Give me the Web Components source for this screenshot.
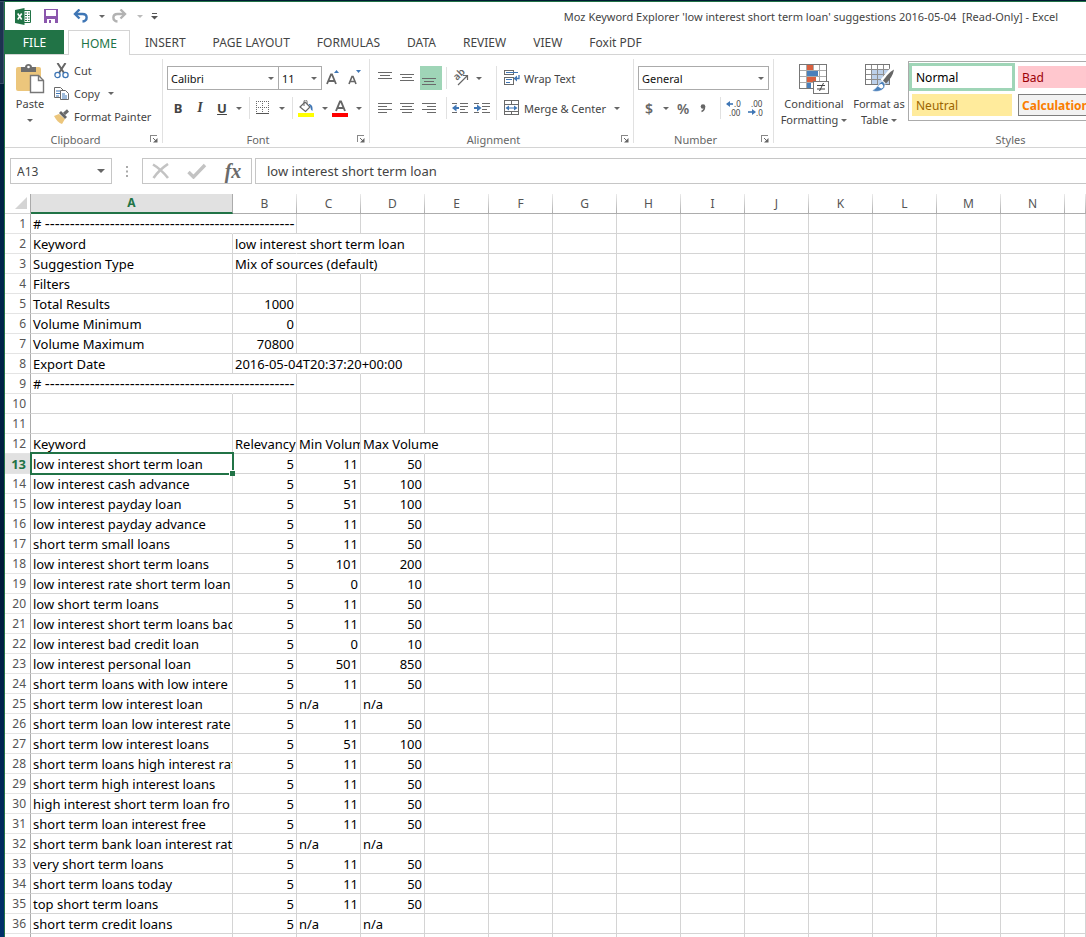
<!DOCTYPE html>
<html lang="en">
<head>
<meta charset="utf-8">
<meta name="viewport" content="width=device-width, initial-scale=1">
<title>Moz Keyword Explorer - Excel</title>
<style>
  html, body { margin: 0; height: 100%; }
  body { font-family: "Noto Sans", "Open Sans", sans-serif; background: #001a33; color: #444; }
</style>
</head>
<body>
<xl-app></xl-app>
<script>
const svg = (w, h, body) =>
  `<svg width="${w}" height="${h}" viewBox="0 0 ${w} ${h}" fill="none" stroke="#6a6a6a" aria-hidden="true">${body}</svg>`;
const bars = (list) => svg(14, 13, `<g shape-rendering="crispEdges">` +
  list.map(([x, y, w]) => `<path d="M${x} ${y}.5h${w}"/>`).join('') + `</g>`);

const ICONS = {
  excel: svg(17, 17, `<path d="M9 2.500h6.500v12H9" stroke="#217346" fill="#fff"/><path d="M10 5h2M10 7.500h2M10 10h2M10 12.500h2M13 5h1.500M13 7.500h1.500M13 10h1.500M13 12.500h1.500" stroke="#217346"/><path d="M0 2l9.500-2v17L0 15z" fill="#217346" stroke="none"/><path d="M2.700 5.500l4 6M6.700 5.500l-4 6" stroke="#fff" stroke-width="1.600"/>`),
  save: svg(14, 14, `<path d="M1 1h12v12H1z" stroke="#8b57ad" stroke-width="2" fill="#8b57ad"/><path d="M2 1h10v6H2z" fill="#fff" stroke="none"/><path d="M3 10h8v4H3z" fill="#fff" stroke="none"/><path d="M5 11h2v3H5z" fill="#8b57ad" stroke="none"/>`),
  undo: svg(16, 14, `<path d="M3 5h6.500c5.500 0 5.500 7 0 7.500" stroke="#3f76b5" stroke-width="2.400"/><path d="M6.500.5L2 5l4.500 4.500" stroke="#3f76b5" stroke-width="2.400"/>`),
  redo: svg(16, 14, `<path d="M13 5H6.500C1 5 1 12 6.500 12.500" stroke="#b2b2b2" stroke-width="2.400"/><path d="M9.500.5L14 5 9.500 9.500" stroke="#b2b2b2" stroke-width="2.400"/>`),
  customize: svg(7, 7, `<path d="M1 .5h5" stroke="#555"/><path d="M0 3h7L3.500 6.500z" fill="#555" stroke="none"/>`),
  paste: svg(30, 32, `<path d="M3 4h21a2 2 0 0 1 2 2v22H3a2 2 0 0 1-2-2V6a2 2 0 0 1 2-2z" fill="#ecc67c" stroke="none"/><path d="M6 4h4c0-4 7-4 7 0h4v5H6z" fill="#6d6d6d" stroke="none"/><circle cx="13.500" cy="4" r="1.300" fill="#fff" stroke="none"/><path d="M15.500 12.500h8l5 5v12h-13z" fill="#fff" stroke="#777" stroke-width="1.400"/><path d="M23.500 12.500v5h5" stroke="#777" stroke-width="1.400"/>`),
  cut: svg(16, 16, `<path d="M3.500 0l6.500 10M11.500 0L5 10" stroke="#666" stroke-width="2"/><circle cx="3.500" cy="12" r="2.600" stroke="#3f76b5" stroke-width="1.300"/><circle cx="11.500" cy="12" r="2.600" stroke="#3f76b5" stroke-width="1.300"/>`),
  copy: svg(16, 15, `<path d="M.5 1.500h6l3 3v7h-9z" fill="#fff"/><path d="M2 5h4M2 7.500h4M2 10h3" stroke="#3f76b5"/><path d="M6.500 4.500h5l3 3v6h-8z" fill="#fff"/><path d="M8 8h3M8 10h5M8 12h5" stroke="#3f76b5"/>`),
  painter: svg(16, 15, `<path d="M0 7l5-2 6 5-3 5C5 14 2 11 0 7z" fill="#ecc67c" stroke="none"/><path d="M5 4l6 6 2-2-6-6z" fill="#666" stroke="none"/><path d="M10 5l4-3.500" stroke-width="3"/>`),
  growFont: svg(14, 16, `<path d="M1 14L5 4.500h1L10 14M2.500 11h6" stroke="#666" stroke-width="1.800"/><path d="M8 3h5l-2.500-3z" fill="#3f76b5" stroke="none"/>`),
  shrinkFont: svg(14, 16, `<path d="M1 14L4 6.500h1L8 14M2 11.500h5" stroke="#666" stroke-width="1.600"/><path d="M8 0h5l-2.500 3z" fill="#3f76b5" stroke="none"/>`),
  borders: svg(14, 14, `<path d="M.5 0v12M6.500 0v12M12.500 0v12M0 .5h13M0 6.500h13" stroke-dasharray="1 1" shape-rendering="crispEdges"/><path d="M0 12.500h13" stroke="#555" shape-rendering="crispEdges"/>`),
  fill: svg(17, 17, `<path d="M2 7l5-5 5 5-4.500 4.500z" fill="#fff" stroke="#666" stroke-width="1.200"/><path d="M6 6V1.500c0-2 3-2 3 0V4" stroke="#666"/><path d="M10.500 4c3 0 4.500 2 4 7-1.500-1-2-2-2-4z" fill="#3f76b5" stroke="none"/><path d="M0 13h16v4H0z" fill="#ff0" stroke="none"/>`),
  fontColor: svg(17, 17, `<path d="M4 11L8 1.500h1L13 11M5.500 8h6" stroke="#666" stroke-width="1.900"/><path d="M0 13h16v4H0z" fill="#f00" stroke="none"/>`),
  top: bars([[0, 0, 14], [2, 3, 10], [0, 6, 14]]),
  middle: bars([[0, 2, 14], [2, 5, 10], [0, 8, 14]]),
  bottom: bars([[0, 6, 14], [2, 9, 10], [0, 12, 14]]),
  left: bars([[0, 1, 14], [0, 4, 9], [0, 7, 14], [0, 10, 9]]),
  center: bars([[0, 1, 14], [2, 4, 10], [0, 7, 14], [2, 10, 10]]),
  right: bars([[0, 1, 14], [5, 4, 9], [0, 7, 14], [5, 10, 9]]),
  orient: svg(17, 16, `<text x="0" y="0" transform="translate(5 11) rotate(-45)" font-size="10" font-weight="600" fill="#666" stroke="none">ab</text><path d="M6 15l9-9M11 5.500h4.500V10" stroke="#666" stroke-width="1.200"/>`),
  outdent: svg(16, 13, `<g shape-rendering="crispEdges"><path d="M0 1.500h5M8 1.500h8M8 4.500h8M8 7.500h5M0 10.500h5M8 10.500h8"/></g><path d="M7 6H2" stroke="#3f76b5" stroke-width="2"/><path d="M4.500 2.500L0 6l4.500 3.500z" fill="#3f76b5" stroke="none"/>`),
  indent: svg(16, 13, `<g shape-rendering="crispEdges"><path d="M0 1.500h5M8 1.500h8M8 4.500h8M8 7.500h5M0 10.500h5M8 10.500h8"/></g><path d="M0 6h5" stroke="#3f76b5" stroke-width="2"/><path d="M3 2.500L7.500 6 3 9.500z" fill="#3f76b5" stroke="none"/>`),
  wrap: svg(16, 16, `<g shape-rendering="crispEdges"><path d="M.5.5h9v4h-9zM.5 7.500h9v7h-9z" fill="#fff"/><path d="M2 2.500h12M2 9.500h6M2 12.500h4" stroke="#3f76b5"/></g><path d="M15 5v3.500h-3" stroke="#3f76b5" stroke-width="1.300"/><path d="M13 5.500v6L9.500 8.500z" fill="#3f76b5" stroke="none"/>`),
  merge: svg(16, 16, `<g shape-rendering="crispEdges"><path d="M.5.5h14v14H.5zM.5 4.500h14M.5 11.500h14M7.500 0v4M7.500 12v3"/></g><path d="M3 8h9" stroke="#3f76b5"/><path d="M5 5.500L1.500 8 5 10.500zM10 5.500L13.500 8 10 10.500z" fill="#3f76b5" stroke="none"/>`),
  comma: svg(6, 9, `<circle cx="3" cy="2.500" r="2.300" fill="#666" stroke="none"/><path d="M4.500 2.500c.3 2.500-.8 4-3 5" stroke="#666" stroke-width="1.400"/>`),
  addDec: svg(16, 16, `<path d="M1 4h6" stroke="#3f76b5" stroke-width="1.600"/><path d="M4 1L0 4l4 3z" fill="#3f76b5" stroke="none"/><g font-size="8" fill="#444" stroke="none"><text x="8" y="7">.0</text><text x="3" y="16">.00</text></g>`),
  subDec: svg(16, 16, `<path d="M0 12h6" stroke="#3f76b5" stroke-width="1.600"/><path d="M4 9l4 3-4 3z" fill="#3f76b5" stroke="none"/><g font-size="8" fill="#444" stroke="none"><text x="3" y="7">.00</text><text x="8" y="16">.0</text></g>`),
  conditional: svg(30, 31, `<g shape-rendering="crispEdges"><path d="M.5.500h27v24H.5z" fill="#fff" stroke="#777"/><path d="M1 6.500h26M1 12.500h26M1 18.500h26M7.500 1v23M14.500 1v23M20.500 1v23" stroke="#aaa"/><path d="M8 1h6v5H8z" fill="#d9603f" stroke="none"/><path d="M8 7h11v5H8z" fill="#4a80bb" stroke="none"/><path d="M8 13h9v5H8z" fill="#d9603f" stroke="none"/><path d="M8 19h4v5H8z" fill="#4a80bb" stroke="none"/><path d="M14.500 17.500h15v12h-15z" fill="#fff" stroke="#777"/></g><path d="M18 22h8M18 25.500h8M24.500 19.500l-4 8" stroke="#444"/>`),
  tableFormat: svg(31, 31, `<g shape-rendering="crispEdges"><path d="M1.500.5h24v20h-24z" fill="#fff" stroke="#777"/><path d="M8 6h17v14H8z" fill="#bcd0ea" stroke="none"/><path d="M2 5.500h23M2 10.500h23M2 15.500h23M7.500 1v19M13.500 1v19M19.500 1v19" stroke="#8d8d8d"/></g><path d="M29 6L19 18" stroke="#fff" stroke-width="6"/><path d="M30 6c-4 2-8 7-11 11l3 3c4-4 7-8 8-14z" fill="#666" stroke="none"/><path d="M19 18c-5 0-4 6-11 9 4 2 13 1 13-6z" fill="#4a80bb" stroke="#fff" stroke-width=".6"/><path d="M14 23c2-3 4-3 5-1s-1 3-2 3z" fill="#fff" stroke="none"/>`),
  launcher: svg(8, 8, `<g shape-rendering="crispEdges"><path d="M.5 7V.5H7" stroke="#888"/></g><path d="M3 3l3 3" stroke="#666"/><path d="M7.500 3v4.500H3z" fill="#666" stroke="none"/>`),
  cancel: svg(18, 16, `<path d="M1 1.500C7 5 12 10 16 15M16 1C10 5 5 10 1.500 15" stroke="#c3c3c3" stroke-width="2.600"/>`),
  enter: svg(20, 16, `<path d="M1.500 9l5 5L18 2" stroke="#c3c3c3" stroke-width="3.400"/>`)
};

function define(name, render) {
  customElements.define(name, class extends HTMLElement {
    constructor() { super(); this.attachShadow({ mode: 'open' }); }
    connectedCallback() {
      const t = document.createElement('template');
      t.innerHTML = render(this);
      this.shadowRoot.replaceChildren(t.content.cloneNode(true));
    }
  });
}

const BUTTON = `button { font: inherit; color: inherit; background: none; border: 0; padding: 0; margin: 0; }`;
const ARROW = `.arrow { width: 0; border: 3px solid transparent; border-top-color: #666; border-bottom: 0; }`;

/* A small ribbon command: icon, optional caption, optional menu arrow. */
define('xl-tool', (el) => {
  const icon = el.getAttribute('icon');
  const text = el.getAttribute('text');
  return `<style>
    :host { display: block; }
    ${BUTTON} ${ARROW}
    button { display: flex; align-items: center; justify-content: ${text ? 'flex-start' : 'center'};
      height: var(--tool-height, 24px); width: ${text ? 'auto' : 'var(--tool-width, 22px)'};
      gap: 4px; white-space: nowrap; font-size: 11px; }
    :host([on]) button { background: #9fd5b7; }
    .arrow { margin-left: 4px; }
    svg { display: block; flex: none; }
    slot { display: block; }
  </style>
  <button type="button" aria-label="${el.getAttribute('label') || text}">${icon ? ICONS[icon] : ''}${text ? `<span>${text}</span>` : '<slot></slot>'}${el.hasAttribute('menu') ? '<span class="arrow"></span>' : ''}</button>`;
});

define('xl-arrow', (el) => `<style>:host { display: block; } ${BUTTON} ${ARROW}
    button { display: grid; place-items: center; width: var(--arrow-width, 12px); height: 24px; }
    :host([dim]) .arrow { border-top-color: #bbb; }
  </style><button type="button" aria-label="${el.getAttribute('label')}"><span class="arrow"></span></button>`);

/* Large command: icon above a one- or two-line caption. */
define('xl-big-tool', (el) => `<style>
    :host { display: block; }
    ${BUTTON} ${ARROW}
    button { display: flex; flex-direction: column; align-items: center; width: 100%; font-size: 11px; line-height: 16px; }
    svg { display: block; height: 34px; }
    .row { display: flex; align-items: center; gap: 3px; height: 16px; white-space: nowrap; }
  </style>
  <button type="button">${ICONS[el.getAttribute('icon')]}<span class="row">${el.getAttribute('line1')}</span><span class="row">${el.getAttribute('line2') || ''}<span class="arrow"></span></span></button>`);

define('xl-combo', (el) => `<style>
    :host { display: block; position: relative; box-sizing: border-box; height: 24px; border: 1px solid #ababab; background: #fff; }
    ${ARROW}
    select { appearance: none; border: 0; outline: 0; background: none; width: 100%; height: 100%; padding: 0 16px 0 3px; margin: 0;
      font: 11px "Noto Sans", sans-serif; color: #111; display: block; }
    .arrow { position: absolute; right: 4px; top: 10px; pointer-events: none; }
  </style>
  <select aria-label="${el.getAttribute('label')}"><option>${el.getAttribute('value')}</option></select><span class="arrow"></span>`);

define('xl-group', (el) => `<style>
    :host { display: flex; flex-direction: column; box-sizing: border-box; flex: none; }
    section { display: flex; flex-direction: column; flex: 1; }
    .body { display: flex; flex: 1; align-items: flex-start; }
    footer { display: flex; align-items: center; height: 16px; font-size: 11px; color: #666; }
    h2 { flex: 1; margin: 0; font: inherit; text-align: center; }
    ${BUTTON}
    button { width: 16px; height: 16px; display: grid; place-items: center; }
  </style>
  <section aria-label="${el.getAttribute('name')}"><div class="body"><slot></slot></div>
  <footer><h2>${el.getAttribute('name')}</h2>${el.hasAttribute('launcher') ? `<button type="button" aria-label="${el.getAttribute('name')} settings">${ICONS.launcher}</button>` : ''}</footer></section>`);

define('xl-title-bar', () => `<style>
    :host { display: flex; align-items: center; justify-content: space-between; height: 28px; padding: 0 28px 0 10px; background: #fff; }
    .quick { display: flex; align-items: center; --arrow-width: 16px; }
    h1 { margin: 0; font-size: 11px; font-weight: 400; white-space: pre; color: #444; }
    .logo { display: grid; margin-right: 10px; }
    .save { margin-right: 8px; }
    .more { --tool-width: 16px; }
  </style>
  <div class="quick">
    <span class="logo">${ICONS.excel}</span>
    <xl-tool class="save" icon="save" label="Save"></xl-tool>
    <xl-tool icon="undo" label="Undo"></xl-tool><xl-arrow label="Undo history"></xl-arrow>
    <xl-tool icon="redo" label="Redo"></xl-tool><xl-arrow dim label="Redo history"></xl-arrow>
    <xl-tool class="more" icon="customize" label="Customize Quick Access Toolbar"></xl-tool>
  </div>
  <h1>Moz Keyword Explorer 'low interest short term loan' suggestions 2016-05-04  [Read-Only] - Excel</h1>`);

define('xl-tabs', () => `<style>
    :host { display: block; background: #fff; }
    nav { display: flex; height: 25px; box-sizing: border-box; border-bottom: 1px solid #d4d4d4; font-size: 12px; }
    ${BUTTON}
    button { padding: 0 13px; margin-right: 1px; height: 24px; white-space: nowrap; }
    .file { background: #217346; color: #fff; width: 59px; margin-right: 4px; }
    .home { box-sizing: border-box; width: 62px; height: 25px; padding: 0; margin-right: 2px; color: #217346; background: #fff;
      border: 1px solid #d4d4d4; border-bottom: 0; }
  </style>
  <nav role="tablist">
    <button type="button" class="file">FILE</button>
    <button type="button" class="home" role="tab" aria-selected="true">HOME</button>
    ${['INSERT', 'PAGE LAYOUT', 'FORMULAS', 'DATA', 'REVIEW', 'VIEW', 'Foxit PDF'].map((t) => `<button type="button" role="tab">${t}</button>`).join('')}
  </nav>`);

define('xl-ribbon', () => `<style>
    :host { display: flex; height: 93px; box-sizing: border-box; padding: 4px 0 0; overflow: hidden; background: #fff; border-bottom: 1px solid #d4d4d4; }
    xl-group { padding-right: 1px; background: linear-gradient(#e1e1e1, #e1e1e1) right top / 1px 84px no-repeat; }
    .clipboard { width: 158px; } .font { width: 207px; } .alignment { width: 264px; } .number { width: 140px; } .styles { width: 474px; }
    .col { display: flex; flex-direction: column; }
    .rows { display: flex; flex-direction: column; gap: 6px; padding: 7px 0 0 4px; }
    .wide { padding-left: 6px; }
    .flush { padding-left: 0; }
    .row { display: flex; align-items: center; height: 24px; }
    .sep { width: 1px; height: 22px; background: #e1e1e1; margin: 0 4px; }
    .rule { width: 1px; height: 54px; background: #e1e1e1; margin: 7px 7px 0 1px; }
    .paste { width: 40px; margin: 3px 4px 0 5px; }
    .lines { --tool-height: 23px; }
    b, i, u { font-size: 13px; font-weight: 700; }
    i { font-family: "Liberation Serif", serif; font-size: 14px; }
    .sym { font-size: 14px; font-weight: 600; color: #666; }
    .cond { width: 74px; margin: 3px 0 0 3px; }
    .table { width: 56px; margin: 3px 1px 0 0; }
    .gallery { display: grid; grid-template-columns: 100px 100px; gap: 6px; flex: 1; box-sizing: border-box;
      height: 60px; margin: 2px 0 0; padding: 4px 3px; border: 1px solid #ababab; }
    .gallery button { height: 22px; border: 0; padding: 0 4px; margin: 0; text-align: left; font: 12px "Noto Sans", sans-serif; }
    .normal { background: #fff; color: #000; outline: 3px solid #9fd5b7; }
    .bad { background: #ffc7ce; color: #9c0006; }
    .neutral { background: #ffeb9c; color: #9c6500; }
    .gallery .calc { background: #f2f2f2; color: #fa7d00; border: 1px solid #7f7f7f; font-weight: 700; padding: 0 3px; }
    .face { width: 112px; } .size { width: 43px; border-left: 0; margin-right: 2px; } .format { width: 131px; }
  </style>
  <xl-group class="clipboard" name="Clipboard" launcher>
    <xl-big-tool class="paste" icon="paste" line1="Paste"></xl-big-tool>
    <div class="col lines">
      <xl-tool icon="cut" text="Cut"></xl-tool>
      <xl-tool icon="copy" text="Copy" menu></xl-tool>
      <xl-tool icon="painter" text="Format Painter"></xl-tool>
    </div>
  </xl-group>
  <xl-group class="font" name="Font" launcher>
    <div class="rows">
      <div class="row"><xl-combo class="face" label="Font name" value="Calibri"></xl-combo><xl-combo class="size" label="Font size" value="11"></xl-combo><xl-tool icon="growFont" label="Increase font size"></xl-tool><xl-tool icon="shrinkFont" label="Decrease font size"></xl-tool></div>
      <div class="row"><xl-tool label="Bold"><b>B</b></xl-tool><xl-tool label="Italic"><i>I</i></xl-tool><xl-tool label="Underline"><u>U</u></xl-tool><xl-arrow label="Underline styles"></xl-arrow><span class="sep"></span><xl-tool icon="borders" label="Borders"></xl-tool><xl-arrow label="Border styles"></xl-arrow><span class="sep"></span><xl-tool icon="fill" label="Fill color"></xl-tool><xl-arrow label="Fill colors"></xl-arrow><xl-tool icon="fontColor" label="Font color"></xl-tool><xl-arrow label="Font colors"></xl-arrow></div>
    </div>
  </xl-group>
  <xl-group class="alignment" name="Alignment" launcher>
    <div class="rows wide">
      <div class="row"><xl-tool icon="top" label="Top align"></xl-tool><xl-tool icon="middle" label="Middle align"></xl-tool><xl-tool on icon="bottom" label="Bottom align"></xl-tool><span class="sep"></span><xl-tool icon="orient" label="Orientation"></xl-tool><xl-arrow label="Orientation options"></xl-arrow></div>
      <div class="row"><xl-tool icon="left" label="Align left"></xl-tool><xl-tool icon="center" label="Center"></xl-tool><xl-tool icon="right" label="Align right"></xl-tool><span class="sep"></span><xl-tool icon="outdent" label="Decrease indent"></xl-tool><xl-tool icon="indent" label="Increase indent"></xl-tool></div>
    </div>
    <span class="rule"></span>
    <div class="rows flush">
      <div class="row"><xl-tool icon="wrap" text="Wrap Text"></xl-tool></div>
      <div class="row"><xl-tool icon="merge" text="Merge &amp; Center" menu></xl-tool></div>
    </div>
  </xl-group>
  <xl-group class="number" name="Number" launcher>
    <div class="rows">
      <div class="row"><xl-combo class="format" label="Number format" value="General"></xl-combo></div>
      <div class="row"><xl-tool label="Accounting format"><span class="sym">$</span></xl-tool><xl-arrow label="Currencies"></xl-arrow><xl-tool label="Percent style"><span class="sym">%</span></xl-tool><xl-tool icon="comma" label="Comma style"></xl-tool><span class="sep"></span><xl-tool icon="addDec" label="Increase decimal"></xl-tool><xl-tool icon="subDec" label="Decrease decimal"></xl-tool></div>
    </div>
  </xl-group>
  <xl-group class="styles" name="Styles">
    <xl-big-tool class="cond" icon="conditional" line1="Conditional" line2="Formatting"></xl-big-tool>
    <xl-big-tool class="table" icon="tableFormat" line1="Format as" line2="Table"></xl-big-tool>
    <div class="gallery">
      <button type="button" class="normal">Normal</button><button type="button" class="bad">Bad</button>
      <button type="button" class="neutral">Neutral</button><button type="button" class="calc">Calculation</button>
    </div>
  </xl-group>`);

define('xl-formula-bar', () => `<style>
    :host { display: flex; align-items: center; height: 46px; padding-left: 5px; background: #fff; }
    ${BUTTON} ${ARROW}
    .box { display: flex; align-items: center; box-sizing: border-box; height: 26px; border: 1px solid #c6c6c6; background: #fff; }
    .name { width: 102px; padding: 0 6px; }
    input { border: 0; outline: 0; padding: 0; margin: 0; min-width: 0; flex: 1; background: none; color: #444; font: 12px "Noto Sans", sans-serif; }
    .name .arrow { border-width: 4px 4px 0; }
    .dots { width: 30px; display: grid; place-items: center; }
    .cmds { width: 110px; margin-right: 3px; }
    .cmds button { flex: 1; display: grid; place-items: center; height: 24px; }
    .fx { font: italic 700 20px "Liberation Serif", serif; color: #6a6a6a; }
    .formula { flex: 1; border-right: 0; padding: 0 11px; }
    .formula input { font-size: 13px; }
  </style>
  <div class="box name"><input aria-label="Name box" value="A13"><span class="arrow"></span></div>
  <div class="dots">${svg(2, 11, '<path d="M0 1h2M0 5.500h2M0 10h2" stroke="#aaa" stroke-width="2"/>')}</div>
  <div class="box cmds"><button type="button" aria-label="Cancel">${ICONS.cancel}</button><button type="button" aria-label="Enter">${ICONS.enter}</button><button type="button" aria-label="Insert function"><span class="fx">fx</span></button></div>
  <div class="box formula"><input aria-label="Formula" value="low interest short term loan"></div>`);

const DASHES = '# <span class="dash">' + '-'.repeat(50) + '</span>';
const ROWS = [
  [DASHES], ['Keyword', 'low interest short term loan'], ['Suggestion Type', 'Mix of sources (default)'], ['Filters'],
  ['Total Results', 1000], ['Volume Minimum', 0], ['Volume Maximum', 70800],
  ['Export Date', '2016-05-04T20:37:20+00:00'], [DASHES], [], [],
  ['Keyword', 'Relevancy', 'Min Volume', 'Max Volume'],
  ['low interest short term loan', 5, 11, 50],
  ['low interest cash advance', 5, 51, 100],
  ['low interest payday loan', 5, 51, 100],
  ['low interest payday advance', 5, 11, 50],
  ['short term small loans', 5, 11, 50],
  ['low interest short term loans', 5, 101, 200],
  ['low interest rate short term loan', 5, 0, 10],
  ['low short term loans', 5, 11, 50],
  ['low interest short term loans bad', 5, 11, 50],
  ['low interest bad credit loan', 5, 0, 10],
  ['low interest personal loan', 5, 501, 850],
  ['short term loans with low intere', 5, 11, 50],
  ['short term low interest loan', 5, 'n/a', 'n/a'],
  ['short term loan low interest rate', 5, 11, 50],
  ['short term low interest loans', 5, 51, 100],
  ['short term loans high interest rates', 5, 11, 50],
  ['short term high interest loans', 5, 11, 50],
  ['high interest short term loan fro', 5, 11, 50],
  ['short term loan interest free', 5, 11, 50],
  ['short term bank loan interest rat', 5, 'n/a', 'n/a'],
  ['very short term loans', 5, 11, 50],
  ['short term loans today', 5, 11, 50],
  ['top short term loans', 5, 11, 50],
  ['short term credit loans', 5, 'n/a', 'n/a'],
  []
];
/* Cells whose text runs on over the empty cells to their right: row -> [first column, last column covered]. */
const SPILL = { 1: [0, 1], 2: [1, 3], 3: [1, 3], 8: [1, 3], 9: [0, 1], 12: [3, 4] };
const COLS = [...'ABCDEFGHIJKLMN'];

define('xl-sheet', () => {
  const head = COLS.map((c) => `<th scope="col"${c === 'A' ? ' class="sel"' : ''}>${c}</th>`).join('') + '<th></th>';
  const body = ROWS.map((row, r) => {
    const n = r + 1, spill = SPILL[n];
    let cells = '';
    for (let c = 0; c <= COLS.length; c++) {
      const v = row[c] ?? '', cls = [];
      if (typeof v === 'number') cls.push('num');
      if (spill && c === spill[0]) cls.push('spill');
      if (spill && c >= spill[0] && c < spill[1]) cls.push('open');
      if (n === 13 && c === 0) cls.push('active');
      cells += `<td${cls.length ? ` class="${cls.join(' ')}"` : ''}>${v}</td>`;
    }
    return `<tr><th scope="row"${n === 13 ? ' class="sel"' : ''}>${n < 37 ? n : ''}</th>${cells}</tr>`;
  }).join('');
  return `<style>
    :host { display: block; flex: 1; min-height: 0; overflow: hidden; background: #fff; }
    table { width: 100%; table-layout: fixed; border-collapse: separate; border-spacing: 0; font-size: 13px; color: #000; }
    .h { width: 26px; } .a { width: 202px; } .c { width: 64px; }
    th, td { box-sizing: border-box; height: 20px; line-height: 18px; padding: 1px 0 0; white-space: nowrap; }
    td { padding: 1px 2px 0; overflow: hidden; border-right: 1px solid #d4d4d4; border-bottom: 1px solid #d4d4d4; }
    th { font-weight: 400; font-size: 12px; color: #555; }
    thead th { padding: 0; border-bottom: 1px solid #ababab; border-right: 1px solid;
      border-image: linear-gradient(#eee, #ababab) 1; }
    thead th.sel { background: #e1e1e1; color: #217346; font-weight: 700; border-image: none; border-bottom: 2px solid #217346; border-right-color: #ababab; }
    thead td { border-right-color: #ababab; border-bottom-color: #d4d4d4; padding: 0 3px 2px 0; line-height: 0; text-align: right; }
    thead td svg { vertical-align: bottom; }
    tbody th { text-align: right; padding-right: 4px; border-right: 1px solid #ababab; border-bottom: 1px solid #e4e4e4; }
    tbody th.sel { background: #e1e1e1; color: #217346; font-weight: 700; font-size: 13px; }
    .num { text-align: right; }
    .spill, .active { overflow: visible; }
    .open { border-right-color: transparent; }
    .dash { font: 15px "Liberation Sans", sans-serif; line-height: 1; }
    .active { position: relative; }
    .active::before { content: ""; position: absolute; inset: -2px -2px -2px -1px; border: 2px solid #217346; }
    .active::after { content: ""; position: absolute; right: -3px; bottom: -3px; width: 5px; height: 5px; background: #217346; border: 1px solid #fff; border-width: 1px 0 0 1px; }
  </style>
  <table>
    <colgroup><col class="h"><col class="a">${'<col class="c">'.repeat(COLS.length - 1)}<col></colgroup>
    <thead><tr><td>${svg(12, 12, '<path d="M12 0v12H0z" fill="#d4d4d4" stroke="none"/>')}</td>${head}</tr></thead>
    <tbody>${body}</tbody>
  </table>`;
});

define('xl-app', () => `<style>
    :host { display: flex; height: 100vh; background: #001a33; box-sizing: border-box; padding-top: 1px; }
    .desktop { width: 4px; flex: none; background: linear-gradient(#001a33, #00264d 30%, #001a38 60%, #00306a); }
    .behind { height: 83px; box-sizing: border-box; background: #1c3350; border: 1px solid #3b4d68; border-left: 0; }
    main { flex: 1; min-width: 0; display: flex; flex-direction: column; box-sizing: border-box;
      border: 1px solid #217346; border-width: 1px 0 0 1px; background: #fff; }
    xl-title-bar, xl-tabs, xl-ribbon, xl-formula-bar { flex: none; }
  </style>
  <div class="desktop"><div class="behind"></div></div>
  <main>
    <xl-title-bar></xl-title-bar>
    <xl-tabs></xl-tabs>
    <xl-ribbon></xl-ribbon>
    <xl-formula-bar></xl-formula-bar>
    <xl-sheet></xl-sheet>
  </main>`);
</script>
</body>
</html>
